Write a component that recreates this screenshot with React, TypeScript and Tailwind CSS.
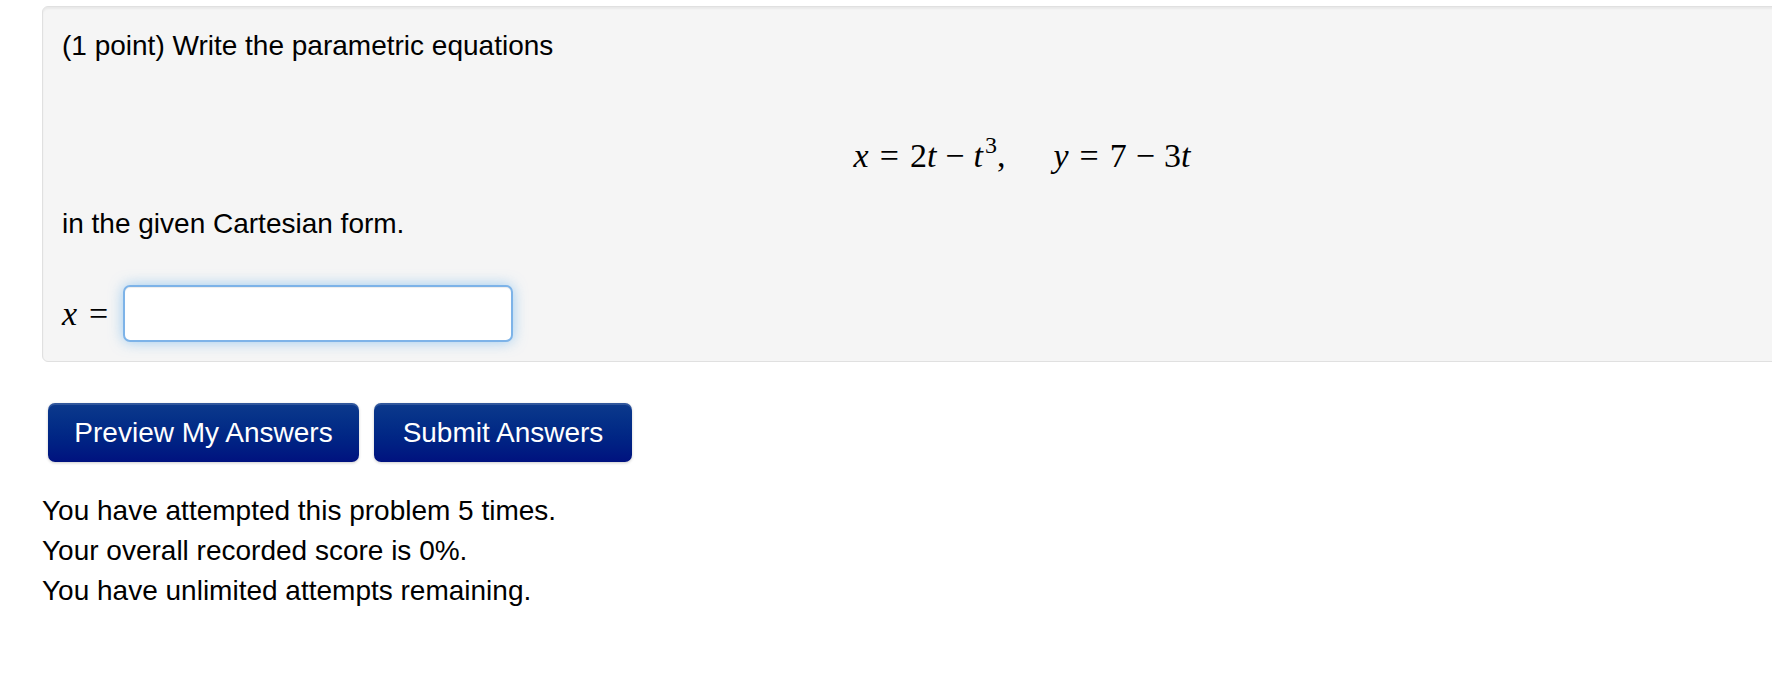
const serif = "font-['Liberation_Serif','Times_New_Roman',serif]";

function Op({ children, wide }: { children: React.ReactNode; wide?: boolean }) {
  return <span className={wide ? "mx-[11px]" : "mx-[9px]"}>{children}</span>;
}

export default function App() {
  return (
    <div className="w-[1772px] h-[674px] overflow-hidden bg-white text-black font-['Liberation_Sans',Arial,sans-serif]">
      <div className="pt-[6px] pl-[42px]">
        {/* problem well, wider than the window so its right edge is cut off */}
        <div className="w-[1960px] rounded-[6px] border border-[#e0e0e0] bg-[#f5f5f5] px-[19px] pt-[19px] pb-[19px] shadow-[inset_0_2px_2px_rgba(0,0,0,0.05)]">
          <p className="text-[28px] leading-[40px]">(1 point) Write the parametric equations</p>

          <div className={`mt-[70px] text-center ${serif} text-[34px] leading-[40px] whitespace-nowrap`}>
            <i>x</i>
            <Op wide>=</Op>2<i>t</i>
            <Op>−</Op>
            <i>t</i>
            <sup className="text-[24px] -top-[14px] ml-[2px]">3</sup>,
            <span className="inline-block w-[48px]" />
            <i>y</i>
            <Op wide>=</Op>7<Op>−</Op>3<i>t</i>
          </div>

          <p className="mt-[28px] text-[28px] leading-[40px]">in the given Cartesian form.</p>

          <div className="mt-[41px] flex items-center gap-[15px]">
            <span className={`${serif} text-[34px] leading-[40px]`}>
              <i>x</i>
              <span className="ml-[12px]">=</span>
            </span>
            <input
              type="text"
              className="h-[57px] w-[390px] rounded-[7px] border-2 border-[#7db3e8] bg-white px-3 outline-none shadow-[inset_0_1px_1px_rgba(0,0,0,0.075),0_0_14px_rgba(82,168,236,0.55)]"
            />
          </div>
        </div>
      </div>

      <div className="mt-[41px] ml-[48px] flex gap-[15px]">
        <button
          type="button"
          className="h-[59px] w-[311px] rounded-[7px] bg-gradient-to-b from-[#0d3a8c] to-[#00117f] text-[28px] text-white shadow-[inset_0_2px_0_rgba(255,255,255,0.15),0_1px_3px_rgba(0,0,0,0.2)]"
        >
          Preview My Answers
        </button>
        <button
          type="button"
          className="h-[59px] w-[258px] rounded-[7px] bg-gradient-to-b from-[#0d3a8c] to-[#00117f] text-[28px] text-white shadow-[inset_0_2px_0_rgba(255,255,255,0.15),0_1px_3px_rgba(0,0,0,0.2)]"
        >
          Submit Answers
        </button>
      </div>

      <div className="mt-[29px] pl-[42px] text-[28px] leading-[40px]">
        <p>You have attempted this problem 5 times.</p>
        <p>Your overall recorded score is 0%.</p>
        <p>You have unlimited attempts remaining.</p>
      </div>
    </div>
  );
}
